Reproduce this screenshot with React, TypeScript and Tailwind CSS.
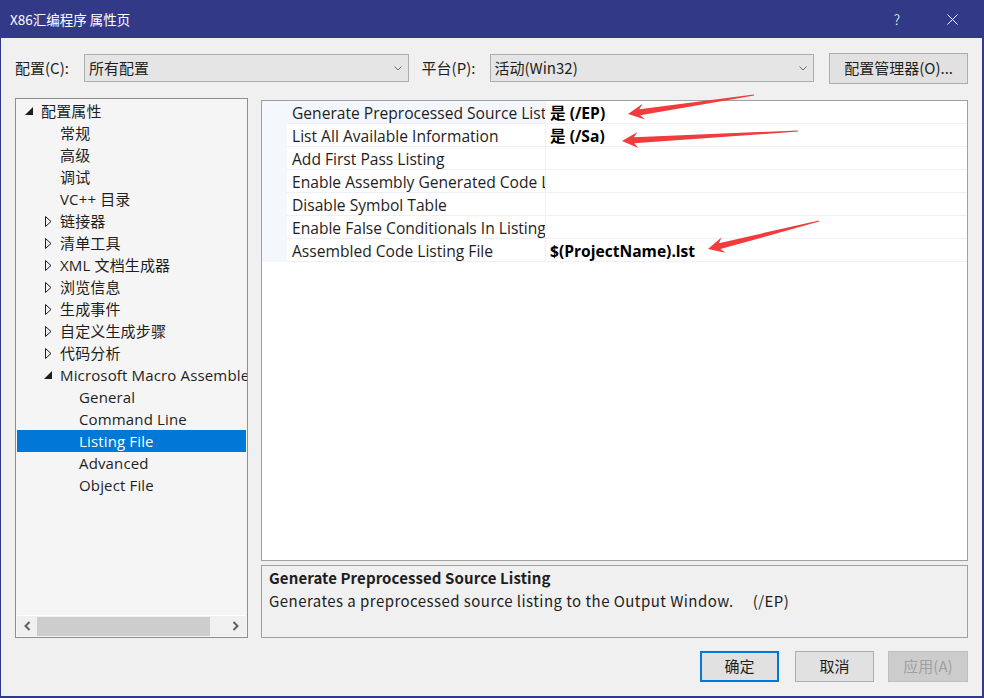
import React from "react";

type TreeItem = {
  label: string;
  level: number;
  icon?: "open" | "closed";
  selected?: boolean;
};

const tree: TreeItem[] = [
  { label: "配置属性", level: 0, icon: "open" },
  { label: "常规", level: 1 },
  { label: "高级", level: 1 },
  { label: "调试", level: 1 },
  { label: "VC++ 目录", level: 1 },
  { label: "链接器", level: 1, icon: "closed" },
  { label: "清单工具", level: 1, icon: "closed" },
  { label: "XML 文档生成器", level: 1, icon: "closed" },
  { label: "浏览信息", level: 1, icon: "closed" },
  { label: "生成事件", level: 1, icon: "closed" },
  { label: "自定义生成步骤", level: 1, icon: "closed" },
  { label: "代码分析", level: 1, icon: "closed" },
  { label: "Microsoft Macro Assembler", level: 1, icon: "open" },
  { label: "General", level: 2 },
  { label: "Command Line", level: 2 },
  { label: "Listing File", level: 2, selected: true },
  { label: "Advanced", level: 2 },
  { label: "Object File", level: 2 },
];

const props = [
  { name: "Generate Preprocessed Source Listing", value: "是 (/EP)", sel: true },
  { name: "List All Available Information", value: "是 (/Sa)" },
  { name: "Add First Pass Listing", value: "" },
  { name: "Enable Assembly Generated Code Listing", value: "" },
  { name: "Disable Symbol Table", value: "" },
  { name: "Enable False Conditionals In Listing", value: "" },
  { name: "Assembled Code Listing File", value: "$(ProjectName).lst" },
];

const indent = ["pl-[7px]", "pl-[26px]", "pl-[45px]"];

// tapered screenshot-style arrow, tail -> tip
function arrow(tx: number, ty: number, hx: number, hy: number) {
  const dx = hx - tx;
  const dy = hy - ty;
  const len = Math.hypot(dx, dy);
  const ux = dx / len;
  const uy = dy / len;
  const nx = -uy;
  const ny = ux;
  const headLen = 16;
  const headHalf = 8;
  const shaft = 3;
  const tail = 0.6;
  const bx = hx - ux * headLen;
  const by = hy - uy * headLen;
  const jx = hx - ux * (headLen - 4);
  const jy = hy - uy * (headLen - 4);
  const pts = [
    [tx + nx * tail, ty + ny * tail],
    [jx + nx * shaft, jy + ny * shaft],
    [bx + nx * headHalf, by + ny * headHalf],
    [hx, hy],
    [bx - nx * headHalf, by - ny * headHalf],
    [jx - nx * shaft, jy - ny * shaft],
    [tx - nx * tail, ty - ny * tail],
  ];
  return pts.map((p) => p.map((v) => v.toFixed(1)).join(",")).join(" ");
}

function Chevron() {
  return (
    <svg width="8" height="5" viewBox="0 0 8 5" className="shrink-0">
      <path d="M0.5 0.5 L4 4 L7.5 0.5" fill="none" stroke="#6d6d6d" strokeWidth="1" />
    </svg>
  );
}

function Combo({ text }: { text: string }) {
  return (
    <div className="w-[325px] h-[28px] border border-[#adadad] bg-[#e5e5e5] flex items-center justify-between pl-[4px] pr-[6px]">
      <span className="text-[15px] text-[#1e1e1e]">{text}</span>
      <Chevron />
    </div>
  );
}

export default function App() {
  return (
    <div className="relative w-[984px] h-[698px] bg-[#f0f0f0] border-l border-r-2 border-b-2 border-[#323a87] flex flex-col font-['Noto_Sans_CJK_SC',sans-serif] text-[#1e1e1e] overflow-hidden">
      {/* title bar */}
      <div className="h-[38px] bg-[#323a87] text-white flex items-center pl-[9px] shrink-0">
        <span className="text-[13.5px]">X86汇编程序 属性页</span>
        <span className="ml-auto text-[14px] mr-[47px] font-light">?</span>
        <svg width="11" height="11" viewBox="0 0 11 11" className="mr-[24px]">
          <path d="M0.5 0.5 L10.5 10.5 M10.5 0.5 L0.5 10.5" stroke="white" strokeWidth="1" />
        </svg>
      </div>

      <div className="flex-1 flex flex-col px-[14px] pt-[14px] pb-[14px]">
        {/* config row */}
        <div className="h-[32px] flex items-center text-[15px]">
          <span className="w-[69px]">配置(C):</span>
          <Combo text="所有配置" />
          <span className="ml-[13px] w-[68px]">平台(P):</span>
          <Combo text="活动(Win32)" />
          <button className="ml-[15px] w-[139px] h-[31px] border border-[#adadad] bg-[#e1e1e1] text-[15px]">
            配置管理器(O)...
          </button>
        </div>

        {/* main */}
        <div className="mt-[14px] h-[540px] flex">
          {/* tree */}
          <div className="w-[233px] h-full border border-[#8f8f8f] bg-[#f5f5f5] flex flex-col overflow-hidden">
            <div className="flex-1 pt-[1px] font-['Open_Sans','Noto_Sans_CJK_SC',sans-serif] text-[15px] whitespace-nowrap">
              {tree.map((t) => (
                <div
                  key={t.label}
                  className={`mx-[1px] h-[22px] flex items-center ${indent[t.level]} ${
                    t.selected ? "bg-[#0078d7] text-white" : "text-[#1e1e1e]"
                  }`}
                >
                  <div className="w-[17px] shrink-0 flex items-center">
                    {t.icon === "open" && (
                      <svg width="8" height="8" viewBox="0 0 8 8" className="ml-[1px]">
                        <polygon points="8,0 8,8 0,8" fill="#1e1e1e" />
                      </svg>
                    )}
                    {t.icon === "closed" && (
                      <svg width="7" height="11" viewBox="0 0 7 11" className="ml-[2px]">
                        <polygon points="0.5,0.5 6,5.5 0.5,10.5" fill="none" stroke="#1e1e1e" strokeWidth="1" />
                      </svg>
                    )}
                  </div>
                  <span className="tracking-[0.15px]">{t.label}</span>
                </div>
              ))}
            </div>
            {/* horizontal scrollbar */}
            <div className="mx-[1px] mb-[1px] h-[21px] border-t border-white bg-[#f0f0f0] flex items-center">
              <div className="w-[20px] flex justify-center">
                <svg width="7" height="10" viewBox="0 0 7 10">
                  <path d="M5.5 1 L1.5 5 L5.5 9" fill="none" stroke="#606060" strokeWidth="2" />
                </svg>
              </div>
              <div className="w-[173px] h-[19px] bg-[#cdcdcd]" />
              <div className="flex-1 flex justify-end pr-[7px]">
                <svg width="7" height="10" viewBox="0 0 7 10">
                  <path d="M1.5 1 L5.5 5 L1.5 9" fill="none" stroke="#606060" strokeWidth="2" />
                </svg>
              </div>
            </div>
          </div>

          {/* right column */}
          <div className="ml-[13px] flex-1 flex flex-col pt-[2px]">
            <div className="h-[461px] border border-[#a0a0a0] bg-white font-['Open_Sans','Noto_Sans_CJK_SC',sans-serif] text-[15.6px]">
              {props.map((p) => (
                <div key={p.name} className="h-[23px] flex">
                  <div className="w-[25px] shrink-0 bg-[#f4f7fc]" />
                  <div
                    className={`w-[259px] shrink-0 border-b border-r border-[#eef0f7] pl-[5px] pt-[2px] overflow-hidden whitespace-nowrap leading-[20px] ${
                      p.sel ? "bg-[#f3f6fc]" : ""
                    }`}
                  >
                    {p.name}
                  </div>
                  <div className="flex-1 border-b border-[#eef0f7] pl-[4px] pt-[2px] leading-[20px] font-bold text-black whitespace-nowrap">
                    {p.value}
                  </div>
                </div>
              ))}
            </div>
            <div className="mt-[4px] h-[73px] border border-[#a0a0a0] bg-[#f0f0f0] pl-[7px] text-[15px] leading-[23px]">
              <div className="font-bold tracking-[0.1px]">Generate Preprocessed Source Listing</div>
              <div className="tracking-[0.45px]">
                Generates a preprocessed source listing to the Output Window.
                <span className="ml-[19px]">(/EP)</span>
              </div>
            </div>
          </div>
        </div>

        {/* buttons */}
        <div className="mt-[13px] h-[31px] flex justify-end text-[15px]">
          <button className="w-[79px] h-[31px] border-2 border-[#0078d7] bg-[#e1e1e1]">确定</button>
          <button className="ml-[16px] w-[79px] h-[31px] border border-[#adadad] bg-[#e1e1e1]">取消</button>
          <button className="ml-[14px] w-[80px] h-[31px] border border-[#bfbfbf] bg-[#cccccc] text-[#a0a0a0]">
            应用(A)
          </button>
        </div>
      </div>

      {/* annotation arrows */}
      <svg className="absolute left-0 top-0 pointer-events-none" width="984" height="698">
        <polygon points={arrow(753, 95, 627, 114)} fill="#f03c3c" />
        <polygon points={arrow(797, 131, 621, 141)} fill="#f03c3c" />
        <polygon points={arrow(818, 221, 707, 249)} fill="#f03c3c" />
      </svg>
    </div>
  );
}
